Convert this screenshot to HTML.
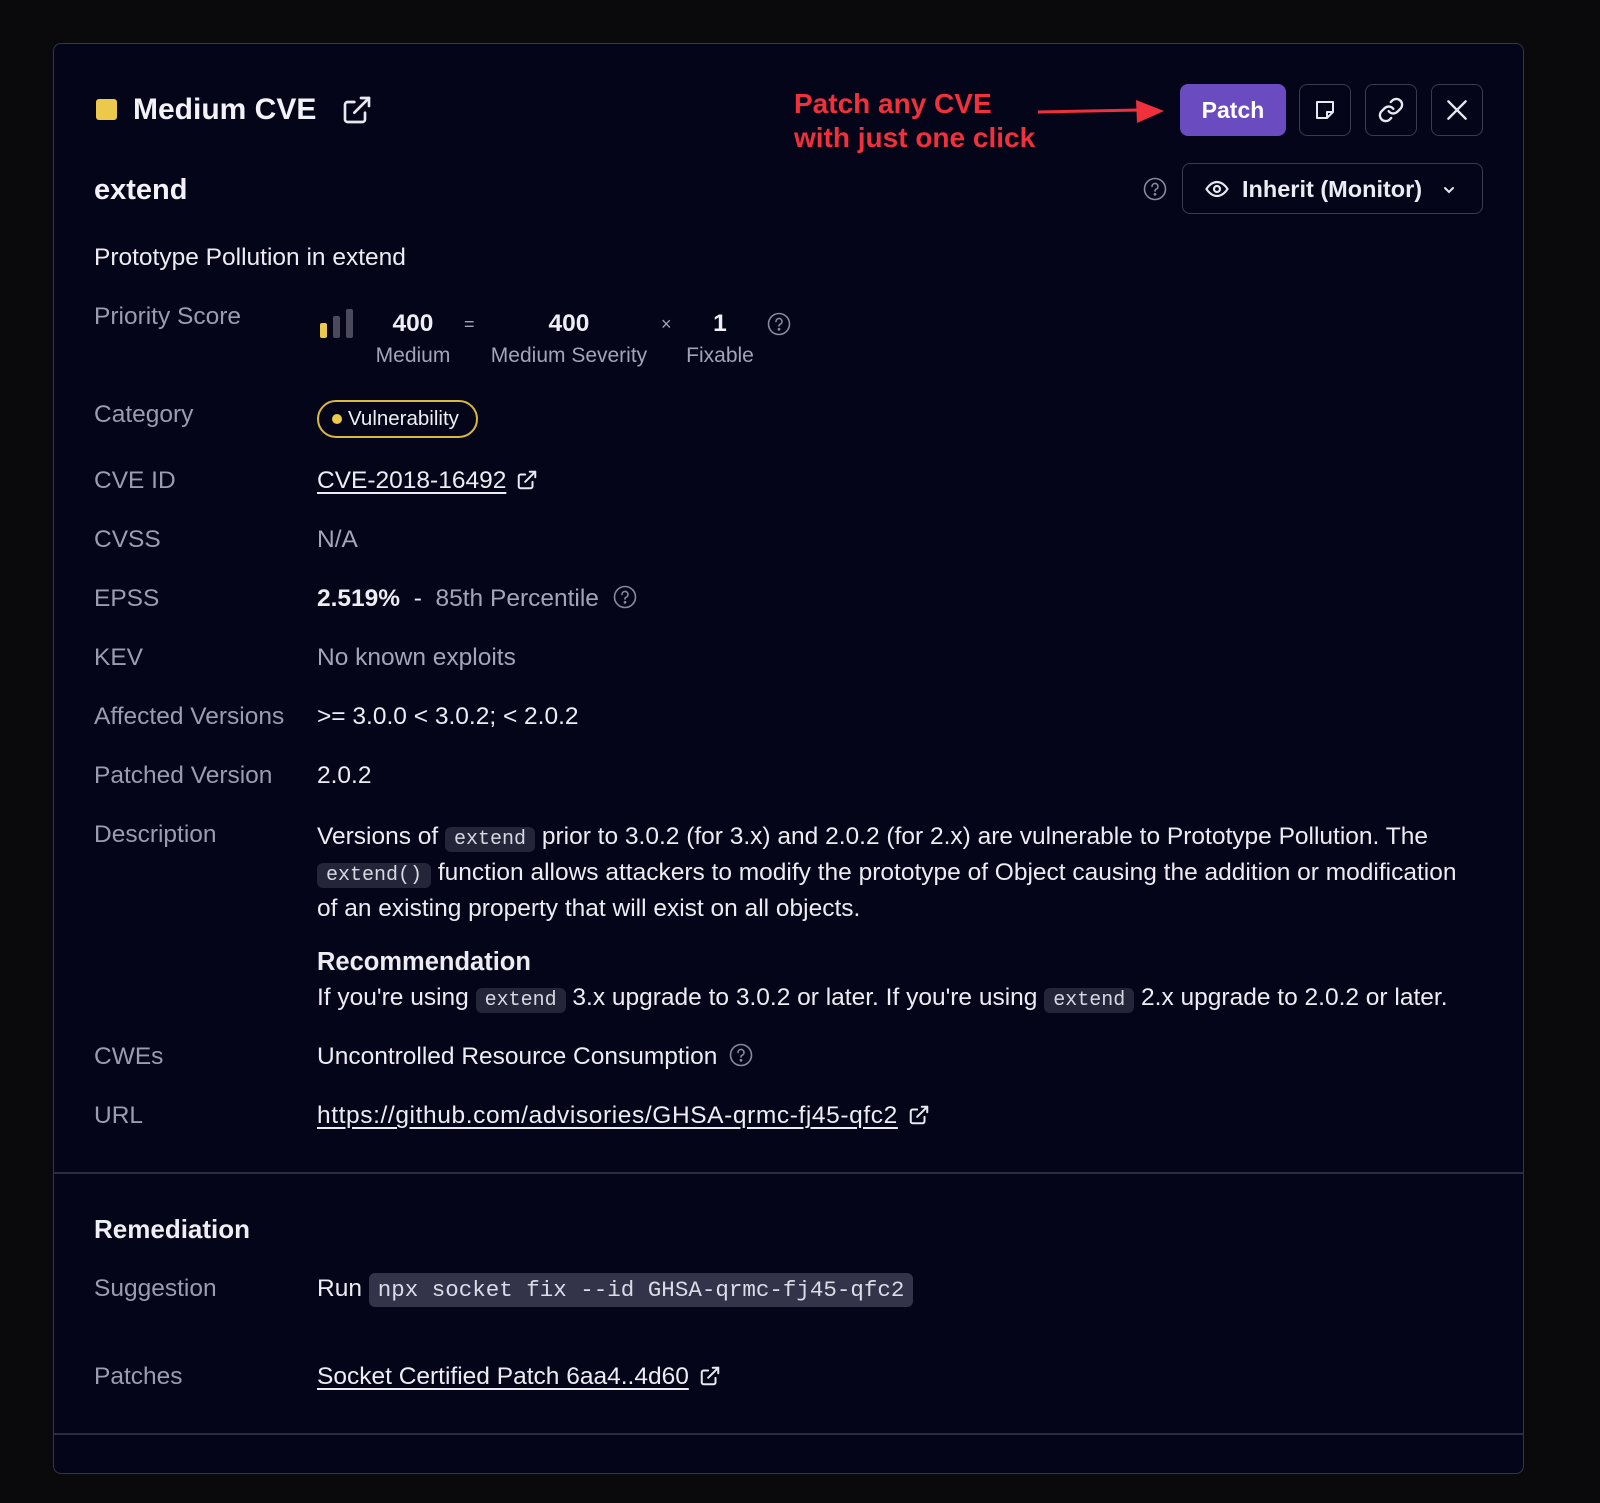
<!DOCTYPE html>
<html><head><meta charset="utf-8"><style>
*{margin:0;padding:0;box-sizing:border-box}
body{width:1600px;height:1503px;background:#0a0a0d;font-family:"Liberation Sans",sans-serif;position:relative;overflow:hidden;color:#eeeef4}
.modal{position:absolute;left:53px;top:43px;width:1471px;height:1431px;background:#05051a;border:1.5px solid #34344a;border-radius:8px}
.a{position:absolute;white-space:nowrap;line-height:32px;font-size:24.5px}
.l{color:#9c9cb0;left:94px}
.v{left:317px;color:#ececf2}
.g{color:#a4a4b8}
code{font-family:"Liberation Mono",monospace;font-size:20px;background:#25253a;border-radius:6px;padding:1px 9px;color:#d8d8e4}
u{text-decoration:underline;text-underline-offset:4px;text-decoration-thickness:2px}
.btn{position:absolute;top:84px;width:52px;height:52px;border:1.5px solid #3a3a50;border-radius:8px;display:flex;align-items:center;justify-content:center}
.hr{position:absolute;left:54px;width:1469px;height:2px;background:#2c2c40}
.ic{vertical-align:-3px;margin-left:10px}
</style></head><body>
<div class="modal"></div>
<div style="position:absolute;left:96px;top:99px;width:21px;height:21px;background:#ecc94b;border-radius:3px"></div>
<div class="a" style="left:133px;top:92px;font-size:30px;line-height:36px;font-weight:bold;color:#f2f2f8">Medium CVE</div>
<svg style="position:absolute;left:341px;top:94px" width="32" height="32" viewBox="0 0 24 24" fill="none" stroke="#e8e8f0" stroke-width="2" stroke-linecap="round" stroke-linejoin="round"><path d="M18 14v5a2 2 0 0 1-2 2H5a2 2 0 0 1-2-2V8a2 2 0 0 1 2-2h5"/><path d="M15 3h6v6"/><path d="M10 14L21 3"/></svg>
<div class="a" style="left:794px;top:87px;font-size:28px;line-height:34px;font-weight:bold;color:#f0303c">Patch any CVE<br>with just one click</div>
<svg style="position:absolute;left:1036px;top:98px" width="130" height="28" viewBox="0 0 130 28"><path d="M2 14 L104 12" stroke="#f0303c" stroke-width="3"/><path d="M100 2 L128 13 L101 25 Z" fill="#f0303c"/></svg>
<div style="position:absolute;left:1180px;top:84px;width:106px;height:52px;background:#6a4bc0;border-radius:8px;color:#fff;font-size:23px;font-weight:bold;display:flex;align-items:center;justify-content:center">Patch</div>
<div class="btn" style="left:1299px"><svg width="24" height="24" viewBox="0 0 24 24" fill="none" stroke="#e8e8f0" stroke-width="2" stroke-linejoin="round"><path d="M4 4h16v10l-6 6H4z"/><path d="M14 20v-6h6"/></svg></div>
<div class="btn" style="left:1365px"><svg width="28" height="28" viewBox="0 0 24 24" fill="none" stroke="#e8e8f0" stroke-width="2" stroke-linecap="round"><path d="M10 13a5 5 0 0 0 7.5.5l3-3a5 5 0 0 0-7-7l-1.7 1.7"/><path d="M14 11a5 5 0 0 0-7.5-.5l-3 3a5 5 0 0 0 7 7l1.7-1.7"/></svg></div>
<div class="btn" style="left:1431px"><svg width="26" height="26" viewBox="0 0 24 24" fill="none" stroke="#e8e8f0" stroke-width="2.2" stroke-linecap="round"><path d="M4 4L20 20M20 4L4 20"/></svg></div>
<div class="a" style="left:94px;top:172px;font-size:29px;line-height:36px;font-weight:bold;color:#f2f2f8">extend</div>
<svg style="position:absolute;left:1143px;top:177px" width="24" height="24" viewBox="0 0 24 24" fill="none" stroke="#8a8a9c" stroke-width="1.6"><circle cx="12" cy="12" r="10.5"/><path d="M9 9.5a3 3 0 1 1 4 2.8c-.7.3-1 .9-1 1.7" stroke-linecap="round"/><circle cx="12" cy="17.3" r=".6" fill="#8a8a9c"/></svg>
<div style="position:absolute;left:1182px;top:163px;width:301px;height:51px;border:1.5px solid #3a3a50;border-radius:8px"></div>
<svg style="position:absolute;left:1204px;top:177px" width="26" height="24" viewBox="0 0 24 24" fill="none" stroke="#e8e8f0" stroke-width="2.2"><path d="M1.5 12S5.5 5 12 5s10.5 7 10.5 7-4 7-10.5 7S1.5 12 1.5 12z"/><circle cx="12" cy="12" r="3"/></svg>
<div class="a" style="left:1242px;top:173px;font-size:23.5px;font-weight:bold;color:#ececf4">Inherit (Monitor)</div>
<svg style="position:absolute;left:1442px;top:183px" width="14" height="14" viewBox="0 0 14 14" fill="none" stroke="#e8e8f0" stroke-width="2" stroke-linecap="round"><path d="M3 5l4 4 4-4"/></svg>

<div class="a" style="left:94px;top:242px;color:#ececf2">Prototype Pollution in extend</div>
<div class="a l" style="top:301px">Priority Score</div>
<div style="position:absolute;left:320px;top:323px;width:7px;height:15px;background:#ecc94b;border-radius:2px"></div>
<div style="position:absolute;left:333px;top:316px;width:7px;height:22px;background:#4a4a5c;border-radius:2px"></div>
<div style="position:absolute;left:346px;top:309px;width:7px;height:29px;background:#4a4a5c;border-radius:2px"></div>
<div class="a" style="left:373px;width:80px;text-align:center;top:308px;font-weight:bold">400</div>
<div class="a g" style="left:363px;width:100px;text-align:center;top:340px;font-size:21px">Medium</div>
<div class="a g" style="left:464px;top:308px;font-size:18px">=</div>
<div class="a" style="left:489px;width:160px;text-align:center;top:308px;font-weight:bold">400</div>
<div class="a g" style="left:479px;width:180px;text-align:center;top:340px;font-size:21px">Medium Severity</div>
<div class="a g" style="left:661px;top:308px;font-size:18px">×</div>
<div class="a" style="left:690px;width:60px;text-align:center;top:308px;font-weight:bold">1</div>
<div class="a g" style="left:675px;width:90px;text-align:center;top:340px;font-size:21px">Fixable</div>
<svg style="position:absolute;left:767px;top:312px" width="24" height="24" viewBox="0 0 24 24" fill="none" stroke="#8a8a9c" stroke-width="1.6"><circle cx="12" cy="12" r="10.5"/><path d="M9 9.5a3 3 0 1 1 4 2.8c-.7.3-1 .9-1 1.7" stroke-linecap="round"/><circle cx="12" cy="17.3" r=".6" fill="#8a8a9c"/></svg>

<div class="a l" style="top:399px">Category</div>
<div style="position:absolute;left:317px;top:400px;width:161px;height:38px;border:2px solid #d8b83e;border-radius:19px"></div>
<div style="position:absolute;left:332px;top:414px;width:10px;height:10px;background:#ecc94b;border-radius:50%"></div>
<div class="a" style="left:348px;top:403px;font-size:20.5px">Vulnerability</div>

<div class="a l" style="top:465px">CVE ID</div>
<div class="a v" style="top:465px"><u>CVE-2018-16492</u><svg class="ic" width="22" height="22" viewBox="0 0 24 24" fill="none" stroke="#e8e8f0" stroke-width="2.2" stroke-linecap="round" stroke-linejoin="round"><path d="M18 14v5a2 2 0 0 1-2 2H5a2 2 0 0 1-2-2V8a2 2 0 0 1 2-2h5"/><path d="M15 3h6v6"/><path d="M10 14L21 3"/></svg></div>
<div class="a l" style="top:524px">CVSS</div>
<div class="a v g" style="top:524px">N/A</div>
<div class="a l" style="top:583px">EPSS</div>
<div class="a v" style="top:583px"><b>2.519%</b>&nbsp; - &nbsp;<span class="g">85th Percentile</span><svg class="ic" style="margin-left:14px" width="24" height="24" viewBox="0 0 24 24" fill="none" stroke="#8a8a9c" stroke-width="1.6"><circle cx="12" cy="12" r="10.5"/><path d="M9 9.5a3 3 0 1 1 4 2.8c-.7.3-1 .9-1 1.7" stroke-linecap="round"/><circle cx="12" cy="17.3" r=".6" fill="#8a8a9c"/></svg></div>
<div class="a l" style="top:642px">KEV</div>
<div class="a v g" style="top:642px">No known exploits</div>
<div class="a l" style="top:701px">Affected Versions</div>
<div class="a v" style="top:701px">&gt;= 3.0.0 &lt; 3.0.2; &lt; 2.0.2</div>
<div class="a l" style="top:760px">Patched Version</div>
<div class="a v" style="top:760px">2.0.2</div>
<div class="a l" style="top:819px">Description</div>
<div class="a v" style="top:820px;line-height:33px">Versions of <code>extend</code> prior to 3.0.2 (for 3.x) and 2.0.2 (for 2.x) are vulnerable to Prototype Pollution. The<br><code>extend()</code> function allows attackers to modify the prototype of Object causing the addition or modification<br>of an existing property that will exist on all objects.</div>
<div class="a v" style="top:946px;font-size:25.5px;font-weight:bold">Recommendation</div>
<div class="a v" style="top:982px">If you're using <code>extend</code> 3.x upgrade to 3.0.2 or later. If you're using <code>extend</code> 2.x upgrade to 2.0.2 or later.</div>
<div class="a l" style="top:1041px">CWEs</div>
<div class="a v" style="top:1041px">Uncontrolled Resource Consumption<svg class="ic" style="margin-left:12px" width="24" height="24" viewBox="0 0 24 24" fill="none" stroke="#8a8a9c" stroke-width="1.6"><circle cx="12" cy="12" r="10.5"/><path d="M9 9.5a3 3 0 1 1 4 2.8c-.7.3-1 .9-1 1.7" stroke-linecap="round"/><circle cx="12" cy="17.3" r=".6" fill="#8a8a9c"/></svg></div>
<div class="a l" style="top:1100px">URL</div>
<div class="a v" style="top:1100px"><u style="letter-spacing:0.6px">https://github.com/advisories/GHSA-qrmc-fj45-qfc2</u><svg class="ic" width="22" height="22" viewBox="0 0 24 24" fill="none" stroke="#e8e8f0" stroke-width="2.2" stroke-linecap="round" stroke-linejoin="round"><path d="M18 14v5a2 2 0 0 1-2 2H5a2 2 0 0 1-2-2V8a2 2 0 0 1 2-2h5"/><path d="M15 3h6v6"/><path d="M10 14L21 3"/></svg></div>

<div class="hr" style="top:1172px"></div>
<div class="a" style="left:94px;top:1213px;font-size:26px;font-weight:bold">Remediation</div>
<div class="a l" style="top:1273px">Suggestion</div>
<div class="a v" style="top:1273px">Run <code style="background:#33334a;font-size:22.5px;padding:4px 9px;color:#dcdce8">npx socket fix --id GHSA-qrmc-fj45-qfc2</code></div>
<div class="a l" style="top:1361px">Patches</div>
<div class="a v" style="top:1361px"><u>Socket Certified Patch 6aa4..4d60</u><svg class="ic" width="22" height="22" viewBox="0 0 24 24" fill="none" stroke="#e8e8f0" stroke-width="2.2" stroke-linecap="round" stroke-linejoin="round"><path d="M18 14v5a2 2 0 0 1-2 2H5a2 2 0 0 1-2-2V8a2 2 0 0 1 2-2h5"/><path d="M15 3h6v6"/><path d="M10 14L21 3"/></svg></div>
<div class="hr" style="top:1433px"></div>
</body></html>
